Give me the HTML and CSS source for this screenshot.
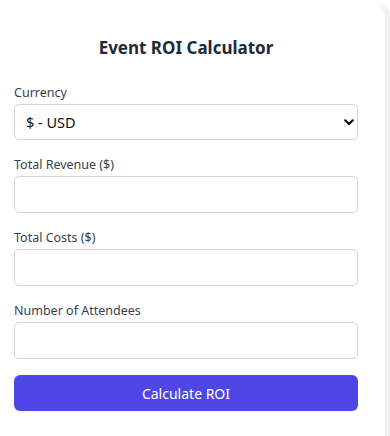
FILE: index.html
```html
<!DOCTYPE html>
<html>
<head>
  <title>Event ROI Calculator</title>
  <link rel="stylesheet" href="styles.css">
</head>
<body>
  <div class="page">
    <div class="card">
      <h1>Event ROI Calculator</h1>

      <div class="form-field">
        <label for="currency">Currency</label>
        <div class="select-wrap">
          <select id="currency">
            <option value="USD">$ - USD</option>
            <option value="EUR">€ - EUR</option>
            <option value="GBP">£ - GBP</option>
          </select>
          <svg class="chevron" width="10" height="7" viewBox="0 0 10 7">
            <path d="M1.2 1.3 L5 5 L8.8 1.3" fill="none" stroke="#111" stroke-width="2.2" stroke-linecap="round" stroke-linejoin="round"/>
          </svg>
        </div>
      </div>

      <div class="form-field">
        <label for="revenue">Total Revenue ($)</label>
        <input type="number" id="revenue">
      </div>

      <div class="form-field">
        <label for="costs">Total Costs ($)</label>
        <input type="number" id="costs">
      </div>

      <div class="form-field">
        <label for="attendees">Number of Attendees</label>
        <input type="number" id="attendees">
      </div>

      <button class="calc-button">Calculate ROI</button>
    </div>
  </div>
</body>
</html>
```

FILE: styles.css
```css
body {
  margin: 0;
  background-color: #ffffff;
  font-family: "Noto Sans", "Open Sans", sans-serif;
}

.page {
  padding-top: 5px;
  height: 431px;
  overflow: hidden;
}

.card {
  width: 344px;
  height: 100%;
  padding: 29px 27px 0 14px;
  background-color: #ffffff;
  border-top-right-radius: 9px;
  box-shadow: 1px 0 0 #ececec, 5px 0 0 #f2f2f2;
}

h1 {
  margin: 0 0 22px 0;
  text-align: center;
  font-size: 17px;
  line-height: 27px;
  font-weight: 700;
  color: #1f2937;
}

.form-field {
  margin-bottom: 15px;
}

.form-field label {
  display: block;
  margin-bottom: 1px;
  font-size: 12.5px;
  line-height: 20px;
  color: #374151;
}

.select-wrap {
  position: relative;
}

.form-field select,
.form-field input {
  display: block;
  box-sizing: border-box;
  width: 100%;
  height: 37px;
  margin: 0;
  border: 1px solid #d1d5db;
  border-radius: 5px;
  background-color: #ffffff;
  font-family: inherit;
  font-size: 14.5px;
  color: #111111;
  outline: none;
}

.form-field select {
  height: 36px;
  padding: 0 0 0 11px;
  appearance: none;
  -webkit-appearance: none;
}

.chevron {
  position: absolute;
  right: 3px;
  top: 15px;
  margin-right: 1px;
}

.form-field input {
  padding: 0 10px;
}

.calc-button {
  display: block;
  width: 100%;
  height: 36px;
  margin-top: 16px;
  border: none;
  border-radius: 6px;
  background-color: #4f46e5;
  color: #ffffff;
  font-family: inherit;
  font-size: 14px;
  cursor: pointer;
}
```
